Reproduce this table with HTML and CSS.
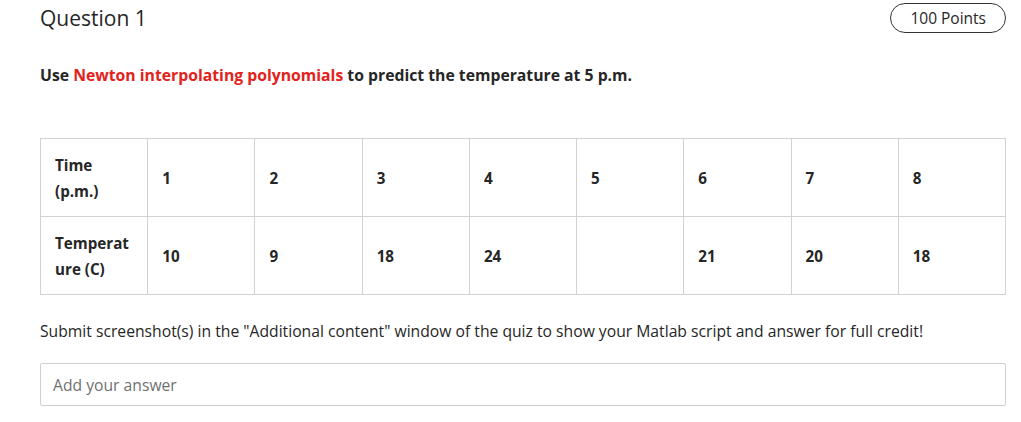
FILE: index.html
```html
<!DOCTYPE html>
<html>
<head>
<meta charset="utf-8">
<link rel="stylesheet" href="styles.css">
</head>
<body>
<div class="page">
  <div class="head">
    <h1 class="title">Question 1</h1>
    <span class="badge">100 Points</span>
  </div>
  <p class="prompt">Use <span class="hl">Newton interpolating polynomials</span> to predict the temperature at 5 p.m.</p>
  <table class="data">
    <tr>
      <td>Time<br>(p.m.)</td><td>1</td><td>2</td><td>3</td><td>4</td><td>5</td><td>6</td><td>7</td><td>8</td>
    </tr>
    <tr>
      <td>Temperat<br>ure (C)</td><td>10</td><td>9</td><td>18</td><td>24</td><td></td><td>21</td><td>20</td><td>18</td>
    </tr>
  </table>
  <p class="note">Submit screenshot(s) in the "Additional content" window of the quiz to show your Matlab script and answer for full credit!</p>
  <input class="answer" type="text" placeholder="Add your answer">
</div>
</body>
</html>
```

FILE: styles.css
```css
* { box-sizing: border-box; }
html, body { margin: 0; background: #fff; }
.page {
  padding: 3px 15px 0 40px;
  font-family: "Open Sans", "Liberation Sans", sans-serif;
  color: #262626;
}
.head {
  display: flex;
  justify-content: space-between;
  align-items: center;
  height: 30px;
}
.title {
  margin: 0;
  font-size: 21px;
  font-weight: 400;
  line-height: 28px;
}
.badge {
  display: flex;
  align-items: center;
  height: 30px;
  padding: 0 19px;
  border: 1px solid #333;
  border-radius: 16px;
  font-size: 15.5px;
}
.prompt {
  margin: 31px 0 0;
  font-size: 15.75px;
  font-weight: 700;
  line-height: 22px;
}
.hl { color: #e3221c; }
.data {
  margin-top: 52px;
  width: 966px;
  border-collapse: collapse;
  table-layout: fixed;
}
.data td {
  border: 1px solid #d2d2d2;
  height: 78px;
  padding: 0 14px;
  vertical-align: middle;
  font-size: 15.2px;
  font-weight: 700;
  line-height: 26px;
}
.note {
  margin: 25px 0 0;
  font-size: 15.7px;
  line-height: 22px;
}
.answer {
  display: block;
  margin-top: 21px;
  width: 966px;
  height: 43px;
  padding: 0 12px;
  border: 1px solid #cfcfcf;
  border-radius: 2px;
  font-family: "Open Sans", "Liberation Sans", sans-serif;
  font-size: 15.7px;
  color: #262626;
  outline: none;
}
.answer::placeholder { color: #707070; }
```
